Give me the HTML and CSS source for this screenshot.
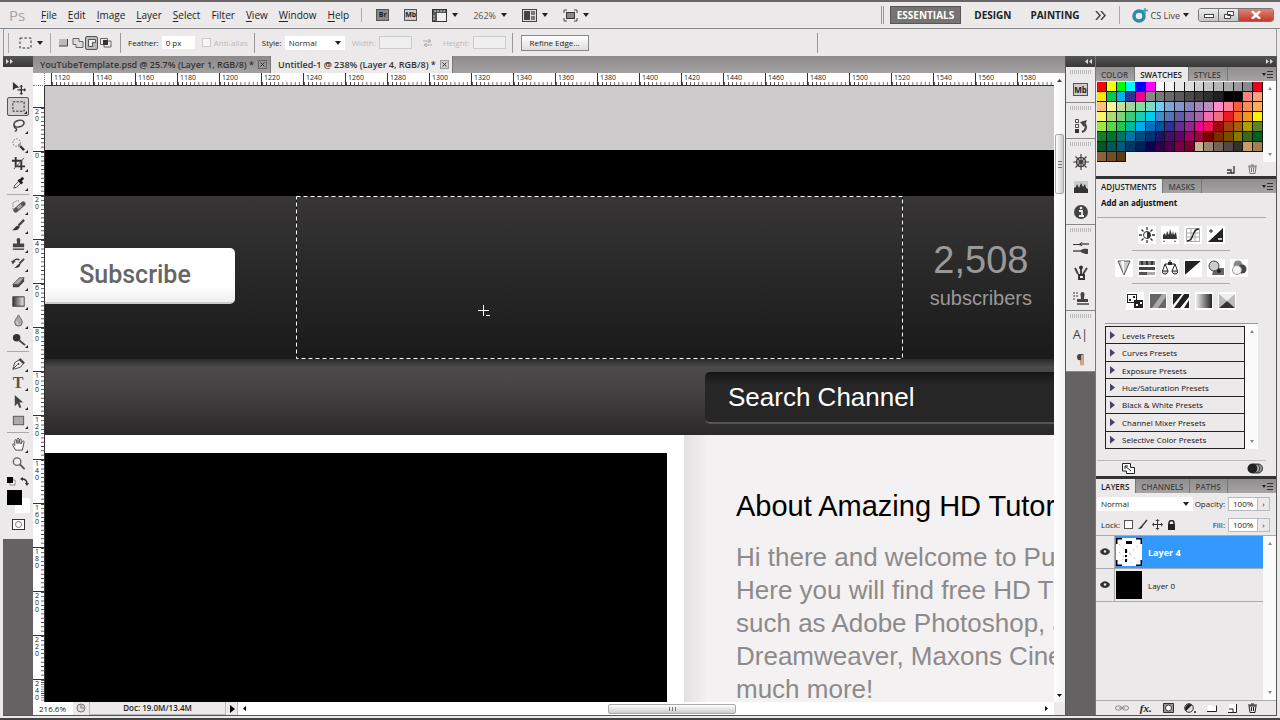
FILE: index.html
```html
<!DOCTYPE html>
<html lang="en">
<head>
    <meta charset="UTF-8">
    <meta name="viewport" content="width=device-width, initial-scale=1.0">
    <title>Photoshop</title>
    <link rel="stylesheet" href="styles.css">
</head>
<body>
<div class="app">

    <!-- Menu bar -->
    <header class="menubar">
        <span class="logo">Ps</span>
        <nav class="menus">
            <button><u>F</u>ile</button>
            <button><u>E</u>dit</button>
            <button><u>I</u>mage</button>
            <button><u>L</u>ayer</button>
            <button><u>S</u>elect</button>
            <button>Fil<u>t</u>er</button>
            <button><u>V</u>iew</button>
            <button><u>W</u>indow</button>
            <button><u>H</u>elp</button>
        </nav>
        <div class="app-tools">
            <button class="chip dark">Br</button>
            <button class="chip">Mb</button>
            <button class="with-arrow" aria-label="View extras">
                <svg width="15" height="13" viewBox="0 0 15 13"><rect x=".5" y=".5" width="14" height="12" fill="#eee" stroke="#333"/><path d="M1 1h13v3H5v8H1z" fill="#555"/><path d="M3 1v2M6 1v2M9 1v2M12 1v2M1 7h2M1 10h2" stroke="#ddd"/></svg>
            </button>
            <button class="with-arrow zoom">262%</button>
            <button class="with-arrow" aria-label="Arrange documents">
                <svg width="15" height="13" viewBox="0 0 15 13"><rect x=".5" y=".5" width="14" height="12" fill="#ddd" stroke="#444"/><path d="M2 2h6v9H2z" fill="#444"/><path d="M9 2h4v4H9zM9 7h4v4H9z" fill="#777"/></svg>
            </button>
            <button class="with-arrow" aria-label="Screen mode">
                <svg width="15" height="13" viewBox="0 0 15 13"><rect x="3.5" y="3.5" width="8" height="6" fill="#888" stroke="#333"/><path d="M1 4V1h3M11 1h3v3M14 9v3h-3M4 12H1V9" fill="none" stroke="#444"/></svg>
            </button>
        </div>
        <div class="workspaces">
            <button class="active">ESSENTIALS</button>
            <button>DESIGN</button>
            <button>PAINTING</button>
            <button class="more" aria-label="More workspaces">
                <svg width="12" height="9" viewBox="0 0 12 9"><path d="M1 0l4 4.500-4 4.500M6 0l4 4.500L6 9" fill="none" stroke="#444" stroke-width="1.500"/></svg>
            </button>
        </div>
        <button class="cslive with-arrow">
            <svg width="16" height="16" viewBox="0 0 16 16"><circle cx="7" cy="9" r="5" fill="none" stroke="#2b8ba9" stroke-width="3.500"/><path d="M13 1v6M10 3.500h6" stroke="#3aa3c0" stroke-width="1.500"/></svg>
            CS Live
        </button>
        <div class="window-buttons">
            <button aria-label="Minimize"><svg width="10" height="8" viewBox="0 0 10 8"><rect x=".5" y="3.500" width="9" height="3" fill="#fff" stroke="#444"/></svg></button>
            <button aria-label="Restore"><svg width="10" height="8" viewBox="0 0 10 8"><path d="M3.500.5h6v4h-6zM.5 3.500h6v4h-6z" fill="#fff" stroke="#444"/></svg></button>
            <button class="close" aria-label="Close"><svg width="10" height="8" viewBox="0 0 10 8"><path d="M1 0l8 8M9 0L1 8" stroke="#fff" stroke-width="2.500"/></svg></button>
        </div>
    </header>

    <!-- Options bar for the marquee tool -->
    <div class="options">
        <button class="with-arrow tool-preset" aria-label="Marquee preset">
            <svg width="13" height="12" viewBox="0 0 13 12"><rect x="1" y="1" width="11" height="10" fill="none" stroke="#333" stroke-dasharray="2.500 2"/></svg>
        </button>
        <div class="modes">
            <button aria-label="New selection"><svg width="9" height="9" viewBox="0 0 9 9"><path d="M0 1h8v7H0z" fill="#bbb"/><path d="M0 8h8.500V1" stroke="#444" fill="none"/></svg></button>
            <button aria-label="Add"><svg width="12" height="10" viewBox="0 0 12 10"><path d="M1 .5h6v3h4v6H4v-3H1z" fill="#ddd" stroke="#666"/></svg></button>
            <button class="pressed" aria-label="Subtract"><svg width="10" height="10" viewBox="0 0 10 10"><path d="M1.500 1.500h7v3h-3v4h-4z" fill="#eee" stroke="#555"/></svg></button>
            <button aria-label="Intersect"><svg width="12" height="10" viewBox="0 0 12 10"><path d="M.5.5h7v6h-7zM4 3h7v6H4z" fill="none" stroke="#666"/><path d="M3 2h5v5H3z" fill="#333"/></svg></button>
        </div>
        <div class="feather">
            <label for="feather">Feather:</label>
            <input id="feather" type="text" value="0 px">
            <input id="anti" type="checkbox" disabled>
            <label for="anti" class="off">Anti-alias</label>
        </div>
        <div class="style-opts">
            <label for="style">Style:</label>
            <span class="select"><select id="style"><option>Normal</option></select></span>
            <label for="width" class="off">Width:</label>
            <input id="width" type="text" disabled>
            <svg class="swap" width="9" height="8" viewBox="0 0 9 8"><path d="M0 2h7M9 6H2M5 0l3 2-3 2M4 4L1 6l3 2" fill="none" stroke="#aaa"/></svg>
            <label for="height" class="off">Height:</label>
            <input id="height" type="text" disabled>
        </div>
        <button class="refine">Refine Edge...</button>
        <span class="end-rule"></span>
    </div>

    <div class="workspace">

        <!-- Toolbox -->
        <aside class="toolbox">
            <div class="dark-head left"><svg width="7" height="5" viewBox="0 0 7 5"><path d="M0 0l3 2.500L0 5zM4 0l3 2.500L4 5z" fill="#ddd"/></svg></div>
            <div class="tools">
                <div class="tool-group">
                    <button class="single" aria-label="Move"><svg viewBox="0 0 16 16"><path d="M2 2v9l3-2.500 4-.5z" fill="#333"/><path d="M11 6v9M7 10.500h8.500" stroke="#333" stroke-width="1.500"/><path d="M11 5l2 2H9zM11 16l2-2H9zM16 10.500l-2-2v4z" fill="#333"/></svg></button>
                    <button class="pressed" aria-label="Marquee"><svg viewBox="0 0 16 16"><rect x="2" y="3" width="12" height="10" fill="none" stroke="#222" stroke-dasharray="2.500 1.500"/></svg></button>
                    <button aria-label="Lasso"><svg viewBox="0 0 16 16"><ellipse cx="8.500" cy="6" rx="5.500" ry="3.500" transform="rotate(-15 8.500 6)" fill="none" stroke="#444" stroke-width="1.700"/><path d="M4 8c-2 2 2 3 2 4s-1 2-2 2" fill="none" stroke="#444" stroke-width="1.500"/></svg></button>
                    <button aria-label="Quick selection"><svg viewBox="0 0 16 16"><circle cx="6" cy="6" r="4" fill="none" stroke="#666" stroke-dasharray="1.500 1.500"/><path d="M8 8l6 6" stroke="#333" stroke-width="2.500"/><path d="M8 8l2 2" stroke="#999" stroke-width="3"/></svg></button>
                    <button aria-label="Crop"><svg viewBox="0 0 16 16"><path d="M5 1v10h10M1 5h10v10" fill="none" stroke="#333" stroke-width="2"/><path d="M3 14L14 2" stroke="#555"/></svg></button>
                    <button aria-label="Eyedropper"><svg viewBox="0 0 16 16"><path d="M3 14l1-3 5-5 2 2-5 5z" fill="#eee" stroke="#444"/><path d="M8 5l4 4M10 6l3-3" stroke="#222" stroke-width="3"/></svg></button>
                </div>
                <div class="tool-group">
                    <button aria-label="Healing brush"><svg viewBox="0 0 16 16"><path d="M5 12l8-7" stroke="#555" stroke-width="5" stroke-linecap="round"/><path d="M7 10l4-3.500" stroke="#aaa" stroke-width="3"/><path d="M2 11V4l4-2h3" fill="none" stroke="#777" stroke-dasharray="1.500 1"/></svg></button>
                    <button aria-label="Brush"><svg viewBox="0 0 16 16"><path d="M14 2L8 8" stroke="#444" stroke-width="2.500"/><path d="M9 8c1 3-2 6-8 5 3-1 3-5 8-5z" fill="#333"/></svg></button>
                    <button aria-label="Stamp"><svg viewBox="0 0 16 16"><path d="M6.500 7L6 3a2 2 0 014 0l-.5 4H14v4H2V7z" fill="#444"/><path d="M2 13h12" stroke="#444" stroke-width="1.500"/></svg></button>
                    <button aria-label="History brush"><svg viewBox="0 0 16 16"><path d="M14 3L9 8" stroke="#444" stroke-width="2"/><path d="M10 8c0 3-2 5-7 5 3-1 3-4 7-5z" fill="#333"/><path d="M2 7c1-4 5-4 7-3" fill="none" stroke="#444" stroke-width="1.500"/><path d="M0 5h5L2 9z" fill="#444"/></svg></button>
                    <button aria-label="Eraser"><svg viewBox="0 0 16 16"><path d="M2 10l7-7h5l-6 7z" fill="#aaa" stroke="#555"/><path d="M2 10h6l6-7v4l-6 6H2z" fill="#444"/></svg></button>
                    <button aria-label="Gradient"><svg viewBox="0 0 16 16"><defs><linearGradient id="gr"><stop offset="0" stop-color="#333"/><stop offset="1" stop-color="#eee"/></linearGradient></defs><rect x="2" y="3" width="12" height="10" fill="url(#gr)" stroke="#333"/></svg></button>
                    <button aria-label="Blur"><svg viewBox="0 0 16 16"><path d="M8 2c2 4 4 5 4 8a4 4 0 01-8 0c0-3 2-4 4-8z" fill="#aaa" stroke="#666"/><path d="M6 9c0 2 1 3 2 3" stroke="#eee" fill="none"/></svg></button>
                    <button aria-label="Dodge"><svg viewBox="0 0 16 16"><circle cx="6" cy="6" r="4" fill="#333"/><path d="M9 9l6 5" stroke="#444" stroke-width="2"/></svg></button>
                </div>
                <div class="tool-group">
                    <button aria-label="Pen"><svg viewBox="0 0 16 16"><path d="M2 14l2-7 5-3 4 4-3 4-7 2z" fill="#eee" stroke="#444"/><path d="M9 3l5 5" stroke="#444" stroke-width="2.500"/><path d="M2 14l5-5" stroke="#444"/><circle cx="8" cy="8.500" r="1" fill="#444"/></svg></button>
                    <button class="type" aria-label="Type">T</button>
                    <button aria-label="Path selection"><svg viewBox="0 0 16 16"><path d="M4 1v12l3-3 2 5 2-1-2-5h4z" fill="#444"/></svg></button>
                    <button aria-label="Rectangle"><svg viewBox="0 0 16 16"><rect x="2.500" y="3.500" width="11" height="9" fill="#aaa" stroke="#555"/></svg></button>
                </div>
                <div class="tool-group last">
                    <button aria-label="Hand"><svg viewBox="0 0 16 16"><path d="M5 14L2 9c-1-2 1-2 2 0V4c0-1.500 1.500-1.500 2 0l.5 3V2.500c0-1.500 2-1.500 2 0V7l.5-4c.5-1.500 2-1 2 0l-.5 4.500L12 5c.5-1 2-1 2 .5L12 14z" fill="#fafafa" stroke="#444"/></svg></button>
                    <button class="single" aria-label="Zoom"><svg viewBox="0 0 16 16"><circle cx="6.500" cy="6" r="4" fill="#eee" stroke="#666" stroke-width="1.500"/><path d="M9.500 9l5 5" stroke="#555" stroke-width="2"/></svg></button>
                </div>
                <div class="mini">
                    <svg width="9" height="9" viewBox="0 0 9 9"><path d="M3 3h5v5H3z" fill="#fff" stroke="#888"/><path d="M0 0h6v6H0z"/></svg>
                    <svg width="9" height="9" viewBox="0 0 9 9"><path d="M2 2c4 0 5 2 5 5" fill="none" stroke="#333" stroke-width="1.500"/><path d="M3 0v4L0 2zM5 6h4L7 9z" fill="#333"/></svg>
                </div>
                <div class="colors"><button class="fg" aria-label="Foreground colour"></button><button class="bg" aria-label="Background colour"></button></div>
                <button class="mask" aria-label="Quick mask"><svg width="13" height="11" viewBox="0 0 13 11"><rect x=".5" y=".5" width="12" height="10" fill="#fff" stroke="#333"/><circle cx="6.500" cy="5.500" r="3" fill="#fff" stroke="#777"/></svg></button>
            </div>
        </aside>

        <!-- Document window -->
        <main class="document">
            <div class="tabs">
                <div class="tab">YouTubeTemplate.psd @ 25.7% (Layer 1, RGB/8) *<button aria-label="Close tab"><svg width="9" height="9" viewBox="0 0 9 9"><rect x=".5" y=".5" width="8" height="8" fill="none" stroke="#666"/><path d="M2.500 2.500l4 4M6.500 2.500l-4 4" stroke="#333"/></svg></button></div>
                <div class="tab active">Untitled-1 @ 238% (Layer 4, RGB/8) *<button aria-label="Close tab"><svg width="9" height="9" viewBox="0 0 9 9"><rect x=".5" y=".5" width="8" height="8" fill="#cdd2c8" stroke="#999"/><path d="M2.500 2.500l4 4M6.500 2.500l-4 4" stroke="#333"/></svg></button></div>
            </div>
            <div class="view">
                <div class="corner"></div>
                <div class="ruler-x" id="ruler-x"></div>
                <div class="ruler-y" id="ruler-y"></div>
                <div class="canvas">
                    <div class="pasteboard"></div>
                    <div class="black-strip"></div>
                    <div class="channel-head">
                        <button class="subscribe">Subscribe</button>
                        <div class="count"><strong>2,508</strong><span>subscribers</span></div>
                    </div>
                    <div class="channel-nav">
                        <div class="search">Search Channel</div>
                    </div>
                    <div class="channel-body">
                        <div class="player"></div>
                        <div class="about">
                            <h2>About Amazing HD Tutor</h2>
                            <p>Hi there and welcome to Pu<br>Here you will find free HD Tu<br>such as Adobe Photoshop, a<br>Dreamweaver, Maxons Cine<br>much more!</p>
                        </div>
                    </div>
                    <svg class="selection" width="607" height="163"><rect x=".5" y=".5" width="606" height="162" fill="none" stroke="#111"/><rect x=".5" y=".5" width="606" height="162" fill="none" stroke="#fff" stroke-dasharray="4 3"/></svg>
                    <svg class="cursor" width="13" height="13" viewBox="0 0 13 13"><path d="M5.500 0v11M0 5.500h11M8 10.500h4" stroke="#fff"/></svg>
                </div>
                <div class="scroll-y">
                    <svg width="5" height="3" viewBox="0 0 5 3"><path d="M0 3h5L2.500 0z" fill="#444"/></svg>
                    <div class="thumb"></div>
                    <svg width="5" height="3" viewBox="0 0 5 3"><path d="M0 0h5L2.500 3z"/></svg>
                </div>
            </div>
            <footer class="status">
                <input type="text" value="216.6%" aria-label="Zoom level">
                <span class="clock"><svg width="10" height="10" viewBox="0 0 10 10"><circle cx="5" cy="5" r="4" fill="#ddd" stroke="#777"/><path d="M5 2v3h3" fill="none" stroke="#777"/></svg></span>
                <span class="doc-size">Doc: 19.0M/13.4M</span>
                <button aria-label="Status menu"><svg width="5" height="8" viewBox="0 0 5 8"><path d="M0 0l5 4-5 4z"/></svg></button>
                <div class="scroll-x">
                    <svg width="3" height="5" viewBox="0 0 3 5"><path d="M3 0v5L0 2.500z"/></svg>
                    <div class="thumb"></div>
                    <svg width="3" height="5" viewBox="0 0 3 5"><path d="M0 0v5l3-2.500z"/></svg>
                </div>
                <span class="grip-corner"></span>
            </footer>
        </main>

        <!-- Collapsed panel icons -->
        <aside class="dock">
            <div class="dark-head"><svg width="7" height="5" viewBox="0 0 7 5"><path d="M3 0L0 2.500 3 5zM7 0L4 2.500 7 5z" fill="#ddd"/></svg></div>
            <div class="dock-group">
                <button class="mb" aria-label="Mini Bridge">Mb</button>
            </div>
            <div class="dock-group">
                <button aria-label="History"><svg viewBox="0 0 16 16"><path d="M2.500 1.500h3v3h-3zM2.500 6.500h3v3h-3z" fill="#fff" stroke="#444"/><path d="M2 11h4v4H2z" fill="#333"/><path d="M9 14c5-2 5-7 1-9" fill="none" stroke="#444" stroke-width="2.200"/><path d="M7 4l7-2-3 7z" fill="#444"/></svg></button>
            </div>
            <div class="dock-group">
                <button aria-label="Navigator"><svg viewBox="0 0 16 16"><circle cx="8" cy="8" r="4.500" fill="none" stroke="#444" stroke-width="1.500"/><path d="M8 0v16M0 8h16M2.500 2.500l11 11M13.500 2.500l-11 11" stroke="#444" stroke-width="1.200"/><circle cx="8" cy="8" r="2" fill="#444"/></svg></button>
                <button aria-label="Histogram"><svg viewBox="0 0 16 16"><path d="M1 2h14v12H1z" fill="#ccc"/><path d="M1 14V9l2-1 1-3 2 4 2-5 2 4 2-3 1 4 2 1v4z" fill="#333"/></svg></button>
                <button aria-label="Info"><svg viewBox="0 0 16 16"><circle cx="8" cy="8" r="7" fill="#444"/><path d="M6 7h3v5M6 12h5" fill="none" stroke="#eee" stroke-width="1.800"/><circle cx="8" cy="4" r="1.300" fill="#eee"/></svg></button>
            </div>
            <div class="dock-group">
                <button aria-label="Brush"><svg viewBox="0 0 16 16"><path d="M0 4h6l3-2 1 2-1 2-3-1H0z" fill="#333"/><path d="M8 4h8M0 11h8" stroke="#777" stroke-width="2"/><path d="M7 11c3-3 5-2 8-2v5c-4 0-5 0-8-3z" fill="#444"/></svg></button>
                <button aria-label="Brush presets"><svg viewBox="0 0 16 16"><path d="M5 9L2 3M8 9V2M10 9l4-6" stroke="#444" stroke-width="2"/><circle cx="8" cy="2.500" r="2" fill="#333"/><path d="M5 9h7v6H5z" fill="#333"/><path d="M7 11h3v2H7z" fill="#eee"/></svg></button>
                <button aria-label="Clone source"><svg viewBox="0 0 16 16"><path d="M0 3h5M0 6h5M0 9h3" stroke="#444" stroke-dasharray="2 1"/><path d="M8 9L7.500 4a2 2 0 014 0L11 9h4v3H4V9z" fill="#444"/><path d="M4 14h12" stroke="#444" stroke-width="1.500"/></svg></button>
            </div>
            <div class="dock-group">
                <button class="char" aria-label="Character">A|</button>
                <button class="char" aria-label="Paragraph">¶</button>
            </div>
        </aside>

        <!-- Panels -->
        <aside class="panels">
            <div class="dark-head"><svg width="7" height="5" viewBox="0 0 7 5"><path d="M0 0l3 2.500L0 5zM4 0l3 2.500L4 5z" fill="#ddd"/></svg></div>

            <section class="panel">
                <div class="panel-tabs"><button>COLOR</button><button class="active">SWATCHES</button><button>STYLES</button><svg class="flyout" width="11" height="7" viewBox="0 0 11 7"><path d="M0 2h4L2 5z" fill="#222"/><path d="M5 .5h6M5 3.500h6M5 6.500h6" stroke="#333"/></svg></div>
                <div class="with-scroll">
                    <div class="swatches" id="swatches"></div>
                    <div class="mini-scroll"></div>
                </div>
                <div class="panel-foot">
                    <svg width="9" height="9" viewBox="0 0 9 9"><path d="M1 8h7V1M5 8V5H1" fill="none" stroke="#333" stroke-width="1.300"/></svg>
                    <svg width="9" height="10" viewBox="0 0 9 10"><path d="M1 3h7l-1 6.500H2zM0 2h9M3 1h3" fill="none" stroke="#777"/><path d="M3.500 4v4M5.500 4v4" stroke="#777"/></svg>
                </div>
            </section>

            <section class="panel adjustments">
                <div class="panel-tabs"><button class="active">ADJUSTMENTS</button><button>MASKS</button><svg class="flyout" width="11" height="7" viewBox="0 0 11 7"><path d="M0 2h4L2 5z" fill="#222"/><path d="M5 .5h6M5 3.500h6M5 6.500h6" stroke="#333"/></svg></div>
                <h3>Add an adjustment</h3>
                <div class="adj-row">
                    <button aria-label="Brightness"><svg viewBox="0 0 16 16"><circle cx="8" cy="8" r="3.500" fill="#fff" stroke="#333"/><path d="M8 4.500a3.500 3.500 0 010 7z" fill="#333"/><path d="M8 0v3M8 13v3M0 8h3M13 8h3M2.500 2.500l2 2M11.500 11.500l2 2M13.500 2.500l-2 2M4.500 11.500l-2 2" stroke="#333" stroke-width="1.300"/></svg></button>
                    <button aria-label="Levels"><svg viewBox="0 0 16 16"><path d="M1 12V8l2-2 1 3 1-5 2 4 1-6 2 6 1-4 1 4 2-3 1 7z" fill="#333"/><path d="M1 15l1-2 1 2zM12 15l1-2 1 2z" fill="#555"/></svg></button>
                    <button aria-label="Curves"><svg viewBox="0 0 16 16"><path d="M1.500 1.500h13v13h-13zM6 1v14M10 1v14M1 6h14M1 10h14" fill="none" stroke="#aaa"/><path d="M2 14c8 0 4-12 12-12" fill="none" stroke="#222" stroke-width="1.300"/></svg></button>
                    <button aria-label="Exposure"><svg viewBox="0 0 16 16"><path d="M15 1v14H0z" fill="#222"/><path d="M1 4h4M3 2v4" stroke="#222"/><path d="M10 12h4" stroke="#fff" stroke-width="1.500"/></svg></button>
                </div>
                <div class="adj-row">
                    <button aria-label="Vibrance"><svg viewBox="0 0 16 16"><path d="M2 1h12L8 15z" fill="#ccc" stroke="#555"/><path d="M8 15L5 1h3z" fill="#fff"/></svg></button>
                    <button aria-label="Hue/Saturation"><svg viewBox="0 0 16 16"><path d="M0 1h16v4H0z" fill="#777"/><path d="M3 1v4M8 1v4M13 1v4" stroke="#333" stroke-width="2"/><path d="M0 7h16v3H0z" fill="#444"/><path d="M0 12h16v3H0z" fill="#aaa"/><path d="M0 12h8v3H0z" fill="#555"/></svg></button>
                    <button aria-label="Color balance"><svg viewBox="0 0 16 16"><path d="M8 0v4M3 4h10M3 4l-2.500 7M3 4l3 7M13 4l-3 7M13 4l2.500 7" fill="none" stroke="#222"/><path d="M6 2h4v3H6z" fill="#222"/><path d="M0 11h6c0 4-6 4-6 0zM10 11h6c0 4-6 4-6 0z" fill="#ccc" stroke="#222"/></svg></button>
                    <button aria-label="Black and white"><svg viewBox="0 0 16 16"><path d="M0 1h16L0 15z" fill="#222"/><path d="M16 1v14H0" fill="#fff"/></svg></button>
                    <button aria-label="Photo filter"><svg viewBox="0 0 16 16"><path d="M6 8h10v7H4z" fill="#666"/><circle cx="6" cy="6" r="5" fill="#ccc" stroke="#444"/><circle cx="11" cy="11" r="2" fill="#222"/></svg></button>
                    <button aria-label="Channel mixer"><svg viewBox="0 0 16 16"><circle cx="7" cy="5" r="4.500" fill="#888"/><circle cx="11" cy="9" r="4.500" fill="#444"/><circle cx="6" cy="10" r="4.500" fill="#f4f4f4" stroke="#999"/></svg></button>
                </div>
                <div class="adj-row tight">
                    <button aria-label="Invert"><svg viewBox="0 0 16 16"><rect x=".5" y="1.500" width="9" height="8" fill="#fff" stroke="#222"/><path d="M7 7h9v8H7z" fill="#222"/><path d="M2 6h2v2H2zM6 3h2v2H6z" fill="#222"/><path d="M9 11h2v2H9zM13 9h2v2h-2z" fill="#fff"/></svg></button>
                    <button aria-label="Posterize"><svg viewBox="0 0 16 16"><rect y="1" width="16" height="14" fill="#666"/><path d="M2 15L12 1h4v3L8 15z" fill="#aaa"/></svg></button>
                    <button aria-label="Threshold"><svg viewBox="0 0 16 16"><rect y="1" width="16" height="14" fill="#222"/><path d="M0 12L9 1h2L1 15H0zM7 15L16 4v3l-5 8z" fill="#fff"/></svg></button>
                    <button aria-label="Gradient map"><svg viewBox="0 0 16 16"><defs><linearGradient id="gm"><stop offset="0" stop-color="#eee"/><stop offset="1" stop-color="#222"/></linearGradient></defs><rect y="1" width="16" height="14" fill="url(#gm)"/></svg></button>
                    <button aria-label="Selective color"><svg viewBox="0 0 16 16"><rect y="1" width="16" height="14" fill="#eee"/><path d="M0 1l8 7-8 7zM16 1L8 8l8 7z" fill="#bbb"/><path d="M0 15l8-7 8 7z" fill="#333"/></svg></button>
                </div>
                <div class="presets">
                    <ul>
                        <li>Levels Presets</li>
                        <li>Curves Presets</li>
                        <li>Exposure Presets</li>
                        <li>Hue/Saturation Presets</li>
                        <li>Black &amp; White Presets</li>
                        <li>Channel Mixer Presets</li>
                        <li>Selective Color Presets</li>
                    </ul>
                    <div class="mini-scroll"></div>
                </div>
                <div class="adj-foot">
                    <svg width="13" height="11" viewBox="0 0 13 11"><path d="M.5.5h8v4h4v6h-8V8h-4z" fill="#fff" stroke="#222"/><path d="M3 3l6 5M3 6V3h3" stroke="#222" fill="none"/></svg>
                    <svg width="16" height="11" viewBox="0 0 16 11"><circle cx="11" cy="5.500" r="4.500" fill="#999" stroke="#222"/><circle cx="8" cy="5.500" r="4.500" fill="#ccc" stroke="#222"/><circle cx="5.500" cy="5.500" r="5" fill="#222"/></svg>
                </div>
            </section>

            <section class="panel layers">
                <div class="panel-tabs"><button class="active">LAYERS</button><button>CHANNELS</button><button>PATHS</button><svg class="flyout" width="11" height="7" viewBox="0 0 11 7"><path d="M0 2h4L2 5z" fill="#222"/><path d="M5 .5h6M5 3.500h6M5 6.500h6" stroke="#333"/></svg></div>
                <div class="layer-opts">
                    <span class="select"><select aria-label="Blend mode"><option>Normal</option></select></span>
                    <label for="opacity">Opacity:</label>
                    <input id="opacity" type="text" value="100%"><button aria-label="Opacity slider">›</button>
                </div>
                <div class="layer-opts">
                    <span class="locks">Lock:
                        <svg width="9" height="9" viewBox="0 0 9 9"><rect x=".5" y=".5" width="8" height="8" fill="#fff" stroke="#555"/></svg>
                        <svg width="11" height="11" viewBox="0 0 11 11"><path d="M10 1L5 7" stroke="#444" stroke-width="1.500"/><path d="M6 6c0 3-2 4-5 4 2-1 2-3 5-4z" fill="#333"/></svg>
                        <svg width="11" height="11" viewBox="0 0 11 11"><path d="M5.500 1v9M1 5.500h9" stroke="#333"/><path d="M5.500 0l2 2h-4zM5.500 11l2-2h-4zM0 5.500l2-2v4zM11 5.500l-2-2v4z" fill="#333"/></svg>
                        <svg width="9" height="10" viewBox="0 0 9 10"><path d="M2 5V3a2.500 2.500 0 015 0v2" fill="none" stroke="#222" stroke-width="1.500"/><path d="M1 4h7v6H1z" fill="#222"/></svg>
                    </span>
                    <label for="fill">Fill:</label>
                    <input id="fill" type="text" value="100%"><button aria-label="Fill slider">›</button>
                </div>
                <div class="with-scroll grow">
                    <div class="layer-list">
                        <div class="layer active">
                            <span class="eye"><svg width="10" height="8" viewBox="0 0 10 8"><path d="M0 4c2-5 8-5 10 0-2 4-8 4-10 0z" fill="#333"/><circle cx="5" cy="3.500" r="1.200" fill="#eee"/></svg></span>
                            <span class="thumbnail"><svg width="26" height="28" viewBox="0 0 26 28"><path d="M0 0h26v28H0z" fill="#fff"/><path d="M.5 6V.5H6M20 .5h5.500V6M25.500 22v5.500H20M6 27.500H.5V22" fill="none" stroke="#000" stroke-width="2"/><path d="M3 6l20 18M3 14l12 11M22 8L5 23" stroke="#bbb" stroke-dasharray="2 3"/><path d="M10 3h6v3h-6zM9 11h2v4H9zM9 17h2v2H9zM9 21h2v3H9z"/></svg></span>
                            <span>Layer 4</span>
                        </div>
                        <div class="layer">
                            <span class="eye"><svg width="10" height="8" viewBox="0 0 10 8"><path d="M0 4c2-5 8-5 10 0-2 4-8 4-10 0z" fill="#333"/><circle cx="5" cy="3.500" r="1.200" fill="#eee"/></svg></span>
                            <span class="thumbnail solid"></span>
                            <span>Layer 0</span>
                        </div>
                    </div>
                    <div class="mini-scroll"></div>
                </div>
                <div class="layer-foot">
                    <svg width="14" height="8" viewBox="0 0 14 8"><rect x=".5" y="2" width="6" height="4" rx="2" fill="none" stroke="#888"/><rect x="7.500" y="2" width="6" height="4" rx="2" fill="none" stroke="#888"/><path d="M4 4h6" stroke="#888"/></svg>
                    <em>fx.</em>
                    <svg width="11" height="10" viewBox="0 0 11 10"><path d="M.5.5h10v9H.5z" fill="#999" stroke="#333"/><circle cx="5.500" cy="5" r="3" fill="#fff" stroke="#333"/></svg>
                    <svg width="12" height="10" viewBox="0 0 12 10"><circle cx="5" cy="5" r="4.300" fill="#ddd" stroke="#333"/><path d="M2 8a4.300 4.300 0 016-6z" fill="#222"/><path d="M10 9h2" stroke="#222" stroke-width="1.500"/></svg>
                    <svg width="10" height="8" viewBox="0 0 10 8"><path d="M.5 1h4l1 1.500h3.500V7H.5z" fill="#fff"/><path d="M0 7.500h9.500V1.500" fill="none" stroke="#222"/></svg>
                    <svg width="9" height="9" viewBox="0 0 9 9"><path d="M1 0h7v8H1z" fill="#fff"/><path d="M0 8.500h8.500V0M5 8V5H1" fill="none" stroke="#222"/></svg>
                    <svg width="9" height="10" viewBox="0 0 9 10"><path d="M1 3h7l-1 6.500H2zM0 2h9M3 1h3" fill="none" stroke="#222"/><path d="M3.500 4v4M5.500 4v4" stroke="#222"/></svg>
                </div>
            </section>
        </aside>
    </div>
</div>
<script src="script.js"></script>
</body>
</html>
```
FILE: styles.css
```css
* {
    box-sizing: border-box;
}

body {
    margin: 0;
    font-family: "Open Sans", "Noto Sans", sans-serif;
    font-size: 8px;
    color: #222;
    background-color: #444;
}

button, input, select {
    font: inherit;
    color: inherit;
    margin: 0;
    padding: 0;
    border: none;
    border-radius: 0;
    background: none;
}

svg {
    display: block;
    flex: none;
}

.app {
    display: flex;
    flex-direction: column;
    height: 100vh;
    border-top: 2px solid #6a6668;
    border-bottom: 2px solid #444;
    background-color: #ebe9e9;
}

/* menu bar */
.menubar {
    display: flex;
    align-items: center;
    height: 27px;
    padding: 0 6px 0 9px;
    border-bottom: 1px solid #8a8888;
    flex: none;
}

.logo {
    width: 32px;
    font-size: 15px;
    color: #a5a3a3;
}

.menus {
    display: flex;
    gap: 11px;
    font-size: 10px;
    padding-right: 12px;
    border-right: 1px solid #aaa;
}

.menus u {
    text-underline-offset: 2px;
}

.app-tools {
    display: flex;
    align-items: center;
    gap: 15px;
    padding-left: 14px;
}

.chip {
    width: 13px;
    height: 12px;
    border: 1px solid #555;
    background-color: #ccc;
    font-size: 7px;
    font-weight: bold;
    line-height: 8px;
}

.chip.dark {
    background-color: #888;
}

.with-arrow {
    display: flex;
    align-items: center;
    gap: 5px;
}

.with-arrow::after,
.select::after {
    content: "";
    border: 3px solid transparent;
    border-top: 4px solid #222;
    border-bottom: none;
}

.zoom {
    color: #555;
    font-size: 9px;
}

.workspaces {
    display: flex;
    align-items: center;
    gap: 7px;
    margin-left: auto;
    padding-left: 6px;
    border-left: 3px double #999;
    font-weight: bold;
    font-size: 10px;
}

.workspaces button {
    height: 18px;
    padding: 0 6px;
}

.workspaces .active {
    background-color: #757373;
    border: 1px solid #555;
    color: #fff;
}

.workspaces .more {
    padding-left: 2px;
}

.cslive {
    height: 18px;
    margin-left: 6px;
    padding-left: 12px;
    border-left: 1px solid #aaa;
    gap: 3px;
    font-size: 9px;
    color: #444;
}

.window-buttons {
    display: flex;
    margin-left: 9px;
    border: 1px solid #777;
    border-radius: 3px;
    overflow: hidden;
}

.window-buttons button {
    display: flex;
    align-items: center;
    justify-content: center;
    width: 20px;
    height: 12px;
    border-right: 1px solid #777;
    background: linear-gradient(#eee, #c4c4c4);
}

.window-buttons .close {
    width: 34px;
    border: none;
    background: linear-gradient(#e08475, #c23a2c);
}

/* options bar */
.options {
    display: flex;
    align-items: center;
    height: 27px;
    margin: 0 3px;
    padding-left: 4px;
    border-left: 1px solid #999;
    border-right: 1px solid #999;
    flex: none;
}

.options > * {
    flex: none;
}

.tool-preset {
    height: 20px;
    padding: 0 7px 0 10px;
    border-left: 1px solid #aaa;
    border-right: 1px solid #aaa;
}

.modes {
    display: flex;
    align-items: center;
    gap: 1px;
    height: 20px;
    padding: 0 8px 0 6px;
    border-right: 1px solid #999;
}

.modes button {
    display: flex;
    align-items: center;
    justify-content: center;
    width: 13px;
    height: 14px;
}

.modes .pressed {
    border: 1px solid #555;
    border-radius: 2px;
    background-color: #bbb;
}

.feather, .style-opts {
    display: flex;
    align-items: center;
    gap: 3px;
    height: 20px;
    padding: 0 6px 0 7px;
    border-right: 1px solid #999;
}

.options input[type="text"] {
    width: 33px;
    height: 13px;
    padding-left: 4px;
    background-color: #fff;
}

.options input:disabled[type="text"] {
    border: 1px solid #ccc;
    background-color: #efefef;
}

.options input[type="checkbox"] {
    appearance: none;
    width: 9px;
    height: 9px;
    margin-left: 4px;
    border: 1px solid #ccc;
    background-color: #f6f6f6;
}

.off {
    color: #bbb;
}

.select {
    position: relative;
    display: flex;
    align-items: center;
    height: 14px;
    background-color: #fff;
}

.select select {
    appearance: none;
    width: 60px;
    padding-left: 4px;
}

.select::after {
    position: absolute;
    right: 4px;
}

.select + .off {
    margin-left: 4px;
}

.swap {
    margin: 0 8px;
}

.refine {
    height: 16px;
    margin-left: 8px;
    padding: 0 8px;
    border: 1px solid #888;
    background: linear-gradient(#fff, #ddd);
}

.end-rule {
    height: 20px;
    margin-left: auto;
    margin-right: 458px;
    border-left: 1px solid #999;
}

/* workspace */
.workspace {
    display: flex;
    flex: 1;
    min-height: 0;
    margin: 0 3px 2px;
    background-color: #646263;
    border-right: 1px solid #555;
    border-bottom: 1px solid #555;
}

.dark-head {
    display: flex;
    align-items: center;
    justify-content: flex-end;
    height: 11px;
    padding: 0 3px;
    background: linear-gradient(#555, #383838);
}

.dark-head.left {
    justify-content: flex-start;
}

.toolbox {
    width: 30px;
    flex: none;
}

.tools {
    padding-top: 11px;
    padding-bottom: 9px;
    background-color: #ebe9e9;
}

.tool-group {
    display: flex;
    flex-direction: column;
    align-items: center;
    margin: 0 4px 2px;
    padding-bottom: 2px;
    border-bottom: 1px solid #aaa;
}

.tool-group.last {
    border-bottom: none;
    margin-bottom: 0;
}

.tool-group button {
    position: relative;
    display: flex;
    align-items: center;
    justify-content: center;
    width: 22px;
    height: 19px;
}

.tool-group button::after {
    content: "";
    position: absolute;
    right: 1px;
    bottom: 1px;
    border-left: 3px solid transparent;
    border-bottom: 3px solid #222;
}

.tool-group .single::after {
    display: none;
}

.tool-group svg {
    width: 15px;
    height: 15px;
}

.tool-group .pressed {
    border: 1px solid #555;
    border-radius: 2px;
    background-color: #d0cece;
}

.tool-group .type {
    font: bold 16px "Liberation Serif", serif;
    color: #555;
}

.mini {
    display: flex;
    justify-content: space-between;
    padding: 2px 4px 4px;
}

.colors {
    display: flex;
    padding-left: 4px;
}

.colors button {
    width: 15px;
    height: 15px;
}

.colors .fg {
    background-color: #000;
    z-index: 1;
}

.colors .bg {
    margin: 8px 0 0 -7px;
    background-color: #fff;
}

.mask {
    display: block;
    margin: 6px auto 0;
}

/* document */
.document {
    display: flex;
    flex-direction: column;
    flex: 1;
    min-width: 0;
}

.tabs {
    display: flex;
    height: 17px;
    background: linear-gradient(#8b898a, #a3a1a2);
    flex: none;
}

.tab {
    display: flex;
    align-items: center;
    gap: 4px;
    padding: 0 3px 0 7px;
    border-right: 1px solid #777;
    font-size: 9px;
    font-weight: 600;
    color: #333;
    white-space: nowrap;
}

.tab.active {
    background-color: #ebe9e9;
}

.view {
    display: grid;
    grid-template-columns: 12px 1fr 11px;
    grid-template-rows: 13px 1fr;
    flex: 1;
    min-height: 0;
}

.corner {
    border-right: 1px dotted #777;
    border-bottom: 1px dotted #777;
    background-color: #fff;
}

.ruler-x, .ruler-y {
    display: flex;
    overflow: hidden;
    background-color: #fff;
    font-size: 7px;
}

.ruler-x {
    border-bottom: 1px solid #333;
    padding-left: 6px;
    line-height: 10px;
}

.ruler-x span {
    flex: none;
    width: 42px;
    padding-left: 2px;
    border-left: 1px solid #333;
    background: linear-gradient(90deg, #444 1px, transparent 1px) 0 100% / 10% 3px repeat-x;
}

.ruler-y {
    flex-direction: column;
    border-right: 1px solid #333;
    padding-top: 21px;
    line-height: 7px;
}

.ruler-y span {
    flex: none;
    height: 44px;
    padding: 0 4px 0 2px;
    border-top: 1px solid #333;
    word-break: break-all;
    background: linear-gradient(#444 1px, transparent 1px) 100% 0 / 3px 10% repeat-y;
}

.ruler-y span:last-child {
    height: auto;
    flex: 1;
}

.scroll-y {
    grid-column: 3;
    grid-row: 1 / 3;
    display: flex;
    flex-direction: column;
    align-items: center;
    padding: 6px 0 5px;
    background: linear-gradient(90deg, #fff, #f2f2f2);
}

.scroll-y .thumb {
    width: 9px;
    height: 60px;
    margin: 52px 0 auto;
    border: 1px solid #aaa;
    border-radius: 2px;
    background: repeating-linear-gradient(#777 0 1px, transparent 1px 3px) center / 4px 7px no-repeat, linear-gradient(90deg, #fff, #ccc);
}

/* artwork on the canvas */
.canvas {
    position: relative;
    display: flex;
    flex-direction: column;
    min-width: 0;
    overflow: hidden;
    background-color: #fff;
    font-family: "Liberation Sans", Arial, sans-serif;
}

.pasteboard {
    height: 64px;
    background-color: #cccacb;
    flex: none;
}

.black-strip {
    height: 46px;
    background-color: #000;
    flex: none;
}

.channel-head {
    display: flex;
    align-items: center;
    justify-content: space-between;
    height: 163px;
    padding: 0 22px 4px 0;
    background: linear-gradient(#373536, #1a1a1a);
    flex: none;
}

.subscribe {
    width: 190px;
    height: 56px;
    padding-right: 10px;
    border-bottom: 2px solid #ccc;
    border-radius: 0 5px 5px 0;
    background: linear-gradient(#fff 70%, #f0eeee);
    font: 500 25px Roboto, sans-serif;
    color: #666;
}

.count {
    display: flex;
    flex-direction: column;
    align-items: center;
    color: #999;
}

.count strong {
    font-size: 38px;
    font-weight: normal;
    line-height: 44px;
}

.count span {
    font-size: 20px;
    line-height: 32px;
}

.channel-nav {
    height: 76px;
    padding: 13px 0 11px 660px;
    background: linear-gradient(#2b2a2a, #4b494a 8px, #454344 40%, #2a2829);
    flex: none;
}

.search {
    height: 52px;
    padding-left: 23px;
    border-bottom: 2px solid #555;
    border-radius: 5px 0 0 5px;
    background: linear-gradient(#151515, #272626 12px);
    font-size: 26px;
    line-height: 50px;
    color: #fff;
    white-space: nowrap;
}

.channel-body {
    display: flex;
    flex: 1;
    min-height: 0;
}

.player {
    width: 622px;
    margin: 18px 17px 0 0;
    background-color: #000;
    flex: none;
}

.about {
    flex: 1;
    min-width: 0;
    padding: 54px 0 0 52px;
    overflow: hidden;
    background: linear-gradient(90deg, #e2e0e1, #f3f1f2 24px);
    white-space: nowrap;
}

.about h2 {
    margin: 0 0 18px;
    font-size: 29px;
    font-weight: normal;
    line-height: 34px;
    color: #000;
}

.about p {
    margin: 0;
    font-size: 26px;
    line-height: 33px;
    color: #8c8a8b;
}

.selection {
    position: absolute;
    left: 251px;
    top: 110px;
}

.cursor {
    position: absolute;
    left: 433px;
    top: 219px;
}

/* status bar */
.status {
    display: flex;
    height: 13px;
    background-color: #ebe9e9;
    flex: none;
}

.status input {
    width: 40px;
    padding-left: 6px;
    background-color: #fff;
}

.status .clock {
    padding: 1px 3px;
}

.doc-size {
    width: 137px;
    border: 1px solid #bbb;
    border-top: none;
    text-align: center;
    line-height: 12px;
    font-weight: 600;
}

.status button {
    width: 12px;
    padding-left: 4px;
    border-right: 1px solid #bbb;
}

.scroll-x {
    display: flex;
    align-items: center;
    flex: 1;
    padding: 0 6px 0 5px;
    background-color: #fff;
}

.scroll-x .thumb {
    width: 128px;
    height: 10px;
    margin: 0 auto 0 362px;
    border: 1px solid #aaa;
    border-radius: 2px;
    background: repeating-linear-gradient(90deg, #777 0 1px, transparent 1px 3px) center / 7px 4px no-repeat, linear-gradient(#fff, #ccc);
}

.grip-corner {
    width: 11px;
}

/* icon dock */
.dock {
    width: 30px;
    flex: none;
    border-left: 1px solid #555;
}

.dock-group {
    display: flex;
    flex-direction: column;
    align-items: center;
    border-bottom: 1px solid #888;
    background-color: #ebe9e9;
}

.dock-group::before {
    content: "";
    width: 22px;
    height: 4px;
    margin: 3px 0;
    background: repeating-linear-gradient(90deg, #bbb 0 1px, transparent 1px 2px);
}

.dock-group button {
    display: flex;
    align-items: center;
    justify-content: center;
    width: 24px;
    height: 25px;
}

.dock-group svg {
    width: 16px;
    height: 16px;
}

.dock-group .mb {
    width: 15px;
    height: 13px;
    margin: 6px;
    border: 1px solid #555;
    background-color: #ccc;
    font-weight: bold;
}

.dock-group .char {
    font-size: 13px;
    color: #444;
}

/* panels */
.panels {
    display: flex;
    flex-direction: column;
    width: 181px;
    flex: none;
    border-left: 1px solid #777;
    background-color: #ebe9e9;
}

.panel {
    border-bottom: 3px solid #333;
}

.panel-tabs {
    display: flex;
    height: 14px;
    background: linear-gradient(#8f8d8e, #a5a3a4);
    color: #444;
    font-weight: 600;
}

.panel-tabs button {
    padding: 0 6px 0 5px;
    border-right: 1px solid #777;
}

.panel-tabs .active {
    background-color: #ebe9e9;
    color: #222;
}

.flyout {
    margin: 4px 3px 0 auto;
}

.with-scroll {
    display: flex;
}

.swatches {
    display: grid;
    grid-template-columns: repeat(17, 1fr);
    flex: 1;
    height: 80px;
    margin: 1px 0 0 1px;
}

.swatches i {
    border-right: 1px solid #111;
    border-bottom: 1px solid #111;
}

.mini-scroll {
    display: flex;
    flex-direction: column;
    justify-content: space-between;
    align-items: center;
    width: 13px;
    padding: 6px 0;
    background-color: #fbfbfb;
    flex: none;
}

.mini-scroll::before,
.mini-scroll::after {
    content: "";
    border: 2px solid transparent;
    border-bottom: 3px solid #888;
    border-top: none;
}

.mini-scroll::after {
    border-top: 3px solid #888;
    border-bottom: none;
}

.panel-foot {
    display: flex;
    align-items: center;
    justify-content: flex-end;
    gap: 13px;
    height: 14px;
    padding-right: 19px;
}

.adjustments h3 {
    height: 25px;
    margin: 0 10px 7px 1px;
    padding-left: 4px;
    border-bottom: 1px solid #aaa;
    font-size: 8px;
    line-height: 20px;
    color: #111;
}

.adj-row {
    display: flex;
    justify-content: center;
    gap: 5px;
    width: 98px;
    height: 26px;
    margin: 0 0 7px 36px;
    padding-top: 1px;
    border-bottom: 1px solid #aaa;
}

.adj-row.tight {
    height: 25px;
    border: none;
}

.adj-row button {
    width: 18px;
    height: 18px;
    padding: 1px;
    background-color: #fff;
    flex: none;
}

.adj-row svg {
    width: 16px;
    height: 16px;
}

.presets {
    display: flex;
    margin: 0 18px 0 9px;
    border-top: 1px solid #999;
}

.presets ul {
    flex: 1;
    height: 123px;
    margin: 2px 0 0;
    padding: 0;
    list-style: none;
    display: flex;
    flex-direction: column;
    border: 1px solid #222;
}

.presets li {
    display: flex;
    align-items: center;
    gap: 7px;
    flex: 1;
    padding-left: 4px;
    color: #111;
}

.presets li + li {
    border-top: 1px solid #222;
}

.presets li::before {
    content: "";
    width: 5px;
    height: 8px;
    background-color: #446;
    clip-path: polygon(0 0, 100% 50%, 0 100%);
}

.adj-foot {
    display: flex;
    align-items: center;
    justify-content: space-between;
    height: 16px;
    margin: 11px 10px 0 1px;
    padding: 0 3px 0 25px;
    border-top: 1px solid #bbb;
}

.layers {
    display: flex;
    flex-direction: column;
    flex: 1;
    min-height: 0;
    border-bottom: none;
}

.layer-opts {
    display: flex;
    align-items: center;
    height: 21px;
    padding: 0 6px 0 1px;
}

.layer-opts .select select {
    width: 96px;
}

.layer-opts label {
    margin-left: auto;
    margin-right: 3px;
}

.layer-opts input {
    width: 30px;
    height: 14px;
    padding-left: 4px;
    border: 1px solid #bbb;
    background-color: #fff;
}

.layer-opts button {
    width: 12px;
    height: 14px;
    border: 1px solid #bbb;
    border-left: none;
    line-height: 10px;
}

.locks {
    display: flex;
    align-items: center;
    gap: 4px;
    padding-left: 4px;
}

.grow {
    flex: 1;
    border-top: 1px solid #aaa;
}

.layer-list {
    flex: 1;
}

.layer {
    display: flex;
    align-items: center;
    gap: 6px;
    height: 33px;
    border-bottom: 1px solid #aaa;
    color: #111;
}

.layer.active {
    background-color: #3399ff;
    color: #fff;
    font-size: 9px;
    font-weight: bold;
}

.eye {
    display: flex;
    align-items: center;
    justify-content: center;
    align-self: stretch;
    width: 19px;
    margin-right: -5px;
    background-color: #ebe9e9;
    border-right: 1px solid #aaa;
}

.thumbnail {
    width: 26px;
    height: 28px;
}

.thumbnail.solid {
    background-color: #000;
}

.layer-foot {
    display: flex;
    align-items: center;
    justify-content: space-between;
    height: 15px;
    padding: 0 19px;
    border-top: 1px solid #aaa;
}

.layer-foot em {
    font: italic bold 11px "Liberation Serif", serif;
}
```
FILE: script.js
```js
const swatchRows = [
    'ff0000 ffff00 00ff00 00ffff 0000ff ff00ff ffffff f4f4f4 e9e9e9 dddddd d0d0d0 c2c2c2 b5b5b5 a8a8a8 9a9a9a 8a8a8a e8001c',
    'ffe800 00c853 00b0f0 2e3192 ec008c 888888 7a7a7a 6a6a6a 5a5a5a 4a4a4a 3c3c3c 2e2e2e 202020 000000 000000 ff8080 ff9f80',
    'ffc27a fff799 c4df9b a2d39c 82dc9c 7bdcc8 6ecff6 7ea7d8 8493ca 8882be a187be bc8dbf ff8cc8 ff8098 ff5a3c ff8c55 fbaf5d',
    'fff467 acdc73 7cd576 3bc878 1accb4 00cff3 438cca 5574b9 605ca8 855fa8 a763a8 f06ea9 f26d7d ed1c24 f26522 f7941d fff200',
    '9de73f 59d54a 20c651 00b99d 00aeef 0072bc 0054a6 2e3192 662d91 92278f ec008c ed145b 9e0b0f a0410d a36209 aba000 598527',
    '1a7b30 007236 00746b 0076a3 004b80 003471 1b1464 440e62 630460 9e005d 9e0039 790000 7b2e00 7d4900 827b00 406618 005e20',
    '005826 005952 005b7f 003663 002157 0d004c 32004b 4b0049 7b0046 7a0026 c7b299 998675 736357 534741 362f2d c69c6d a67c52',
    '8c6239 754c24 603913'
];

const swatches = document.getElementById('swatches');
swatchRows.join(' ').split(' ').forEach(hex => {
    const cell = document.createElement('i');
    cell.style.backgroundColor = '#' + hex;
    swatches.appendChild(cell);
});

function fillRuler(id, labels) {
    const ruler = document.getElementById(id);
    labels.forEach(label => {
        const mark = document.createElement('span');
        mark.textContent = label;
        ruler.appendChild(mark);
    });
}

const across = [];
for (let n = 1120; n <= 1580; n += 20) across.push(n);

const down = [20];
for (let n = 0; n <= 240; n += 20) down.push(n);

fillRuler('ruler-x', across);
fillRuler('ruler-y', down);
```
